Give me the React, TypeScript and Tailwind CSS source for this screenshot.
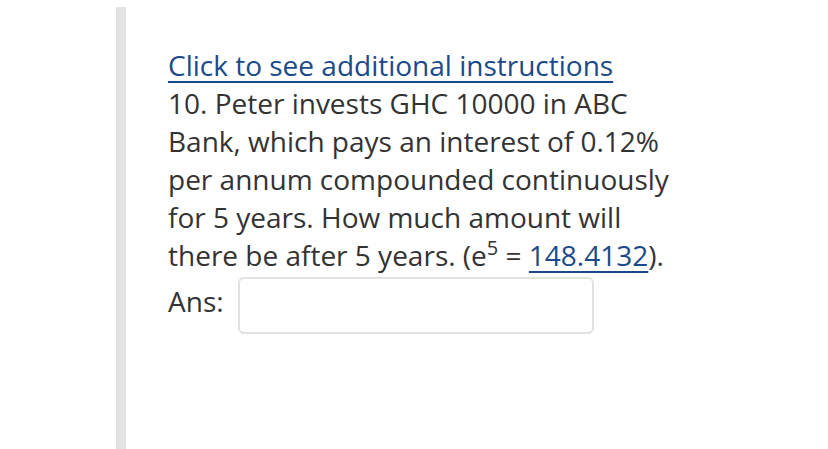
import React from 'react';

export default function App() {
  return (
    <div className="w-[828px] h-[449px] bg-white overflow-hidden flex pl-[116px] pt-[7px]" style={{ fontFamily: '"Open Sans", sans-serif' }}>
      <div className="w-[10px] self-stretch bg-[#e3e3e3]" />
      <div className="pl-[42px] pt-[39px] w-[552px] text-[28px] leading-[38px] text-[#333333]">
        <a href="#" className="text-[#1b4a8a] underline underline-offset-[5px] decoration-[2px] block w-max">
          Click to see additional instructions
        </a>
        <p>
          10. Peter invests GHC 10000 in ABC Bank, which pays an interest of 0.12% per annum compounded continuously
          for 5 years. How much amount will there be after 5 years. (e<sup className="text-[20px] leading-none relative -top-[11px] align-baseline">5</sup> ={' '}
          <a href="#" className="text-[#1b4a8a] underline underline-offset-[5px] decoration-[2px]">148.4132</a>).
        </p>
        <div className="flex items-center gap-[14px] mt-[3px]">
          <span className="relative -top-[5px]">Ans:</span>
          <input type="text" className="w-[356px] h-[57px] border-2 border-[#e1e1e1] rounded-[6px] outline-none px-3" />
        </div>
      </div>
    </div>
  );
}
